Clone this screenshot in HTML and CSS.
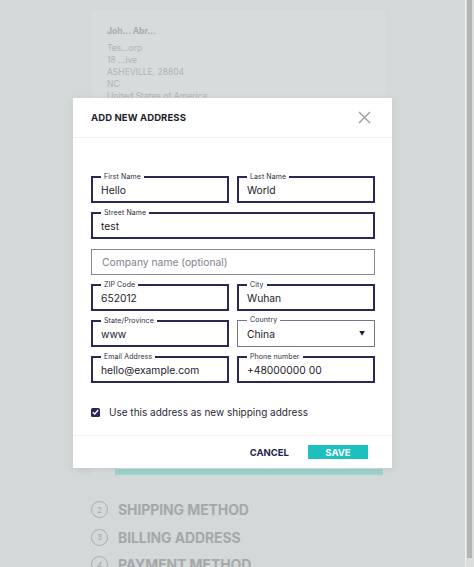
FILE: index.html
```html
<!DOCTYPE html>
<html lang="en">
<head>
<meta charset="utf-8">
<title>Add new address</title>
<link rel="stylesheet" href="styles.css">
</head>
<body>
<div class="viewport">
  <div class="page">
    <div class="bg-card">
      <div class="bg-name">Joh... Abr...</div>
      <div class="bg-lines">
        <div>Tes...orp</div>
        <div>18 ...ive</div>
        <div>ASHEVILLE, 28804</div>
        <div>NC</div>
        <div>United States of America</div>
      </div>
      <div class="bg-spacer"></div>
      <div class="bg-button"></div>
    </div>
    <ol class="steps">
      <li><span class="step-num">2</span><span class="step-text">SHIPPING METHOD</span></li>
      <li><span class="step-num">3</span><span class="step-text">BILLING ADDRESS</span></li>
      <li><span class="step-num">4</span><span class="step-text">PAYMENT METHOD</span></li>
    </ol>
  </div>
  <div class="scrollbar"><div class="thumb"></div></div>
</div>

<div class="modal">
  <div class="modal-header">
    <h2 class="modal-title">ADD NEW ADDRESS</h2>
    <svg class="close" width="13" height="13" viewBox="0 0 13 13"><path d="M1 1L12 12M12 1L1 12" stroke="#9a9a9a" stroke-width="1.3" fill="none"/></svg>
  </div>
  <div class="modal-body">
    <div class="grid">
      <div class="field"><span class="label">First Name</span><span class="value">Hello</span></div>
      <div class="field"><span class="label">Last Name</span><span class="value">World</span></div>
      <div class="field wide"><span class="label">Street Name</span><span class="value">test</span></div>
      <div class="field wide empty"><span class="placeholder">Company name (optional)</span></div>
      <div class="field"><span class="label">ZIP Code</span><span class="value">652012</span></div>
      <div class="field"><span class="label">City</span><span class="value">Wuhan</span></div>
      <div class="field"><span class="label">State/Province</span><span class="value">www</span></div>
      <div class="field select"><span class="label">Country</span><span class="value">China</span><span class="arrow">&#9660;</span></div>
      <div class="field"><span class="label">Email Address</span><span class="value">hello@example.com</span></div>
      <div class="field"><span class="label">Phone number</span><span class="value">+48000000 00</span></div>
    </div>
    <label class="check">
      <span class="box"><svg width="7" height="6" viewBox="0 0 7 6"><path d="M0.8 3.2L2.7 5L6.2 1" stroke="#fff" stroke-width="1.3" fill="none"/></svg></span>
      <span>Use this address as new shipping address</span>
    </label>
  </div>
  <div class="modal-footer">
    <button class="btn-cancel">CANCEL</button>
    <button class="btn-save">SAVE</button>
  </div>
</div>
</body>
</html>
```

FILE: styles.css
```css
* { box-sizing: border-box; }
html, body { margin: 0; padding: 0; height: 100%; overflow: hidden; }
body {
  font-family: Inter, "Noto Sans", "Liberation Sans", sans-serif;
  background: #d3d8d8;
  position: relative;
}
.viewport { display: flex; height: 567px; }
.page { flex: 1; padding: 10px 0 0 92px; }
.bg-card {
  width: 293px;
  height: 465px;
  background: #d6dbdb;
  padding: 15px 0 0 15px;
  display: flex;
  flex-direction: column;
}
.bg-name { font-size: 8.5px; font-weight: 700; color: #a6aaab; line-height: 12px; margin-bottom: 5px; }
.bg-lines { font-size: 8.5px; color: #b0b4b5; line-height: 12px; }
.bg-spacer { flex: 1; }
.bg-button { margin-left: 8px; width: 268px; height: 6px; background: #9fd4cf; }
.steps { list-style: none; margin: 21px 0 0 -1px; padding: 0; }
.steps li { display: flex; align-items: center; height: 27.5px; }
.step-num {
  width: 17px; height: 17px; border: 1px solid #a9adaf; border-radius: 50%;
  font-size: 8px; color: #a5a9ab; display: flex; align-items: center; justify-content: center;
  margin-right: 10px;
}
.step-text { font-size: 14px; font-weight: 700; color: #a4a8aa; letter-spacing: -0.1px; }
.scrollbar { width: 9px; background: #dcdede; border-left: 1px solid #eceeee; padding: 0 1px; }
.thumb { width: 5px; height: 558px; background: #b3b5b6; margin-left: 0; }

.modal {
  position: absolute;
  left: 73px; top: 98px;
  width: 319px; height: 370px;
  background: #fff;
  box-shadow: 0 2px 8px rgba(0,0,0,0.08);
  display: flex; flex-direction: column;
}
.modal-header {
  height: 40px;
  display: flex; align-items: center; justify-content: space-between;
  padding: 0 21px 0 18px;
  border-bottom: 1px solid #f2f2f2;
}
.modal-title { margin: 0; font-size: 9.5px; font-weight: 700; color: #1d1d2b; letter-spacing: 0.1px; }
.close { display: block; }
.modal-body { padding: 38px 17px 0 18px; flex: 1; }
.grid { display: grid; grid-template-columns: 138px 138px; column-gap: 8px; row-gap: 9px; }
.field {
  position: relative;
  height: 27px;
  border: 2px solid #2b2858;
  display: flex; align-items: center;
  padding: 0 8px;
}
.field.wide { grid-column: 1 / 3; }
.field.empty { border: 1px solid #8a8898; margin-top: 1px; height: 26px; padding-left: 10px; }
.field.select { border: 1px solid #77758c; padding-left: 9px; justify-content: space-between; }
.label {
  position: absolute;
  top: -5px; left: 8px;
  background: #fff;
  padding: 0 3px;
  font-size: 7px; line-height: 8px;
  color: #2d2d3a;
  letter-spacing: 0.1px;
}
.field.select .label { top: -5px; left: 9px; }
.value { font-size: 10.3px; color: #1c1c2a; padding-top: 1px; }
.placeholder { font-size: 10.3px; color: #7f7f8c; }
.arrow { font-size: 6px; color: #1c1c2a; margin-right: 1px; }
.check {
  display: flex; align-items: center;
  margin-top: 23px;
  font-size: 10px; color: #2a2a36;
}
.box {
  width: 9px; height: 9px; background: #2b2858; border-radius: 1.5px;
  display: flex; align-items: center; justify-content: center;
  margin-right: 9px;
}
.box svg { display: block; }
.modal-footer {
  height: 33px;
  border-top: 1px solid #f2f2f2;
  display: flex; align-items: center; justify-content: flex-end;
  padding: 0 24px 0 0;
  margin-bottom: 0;
}
.btn-cancel {
  border: 0; background: none; padding: 0;
  font-family: inherit; font-size: 9.5px; font-weight: 700; color: #26234f;
  margin-right: 19px;
}
.btn-save {
  border: 0; background: #1ec0bf; color: #fff;
  font-family: inherit; font-size: 9.5px; font-weight: 700;
  width: 60px; height: 14px; padding: 0;
}
```
